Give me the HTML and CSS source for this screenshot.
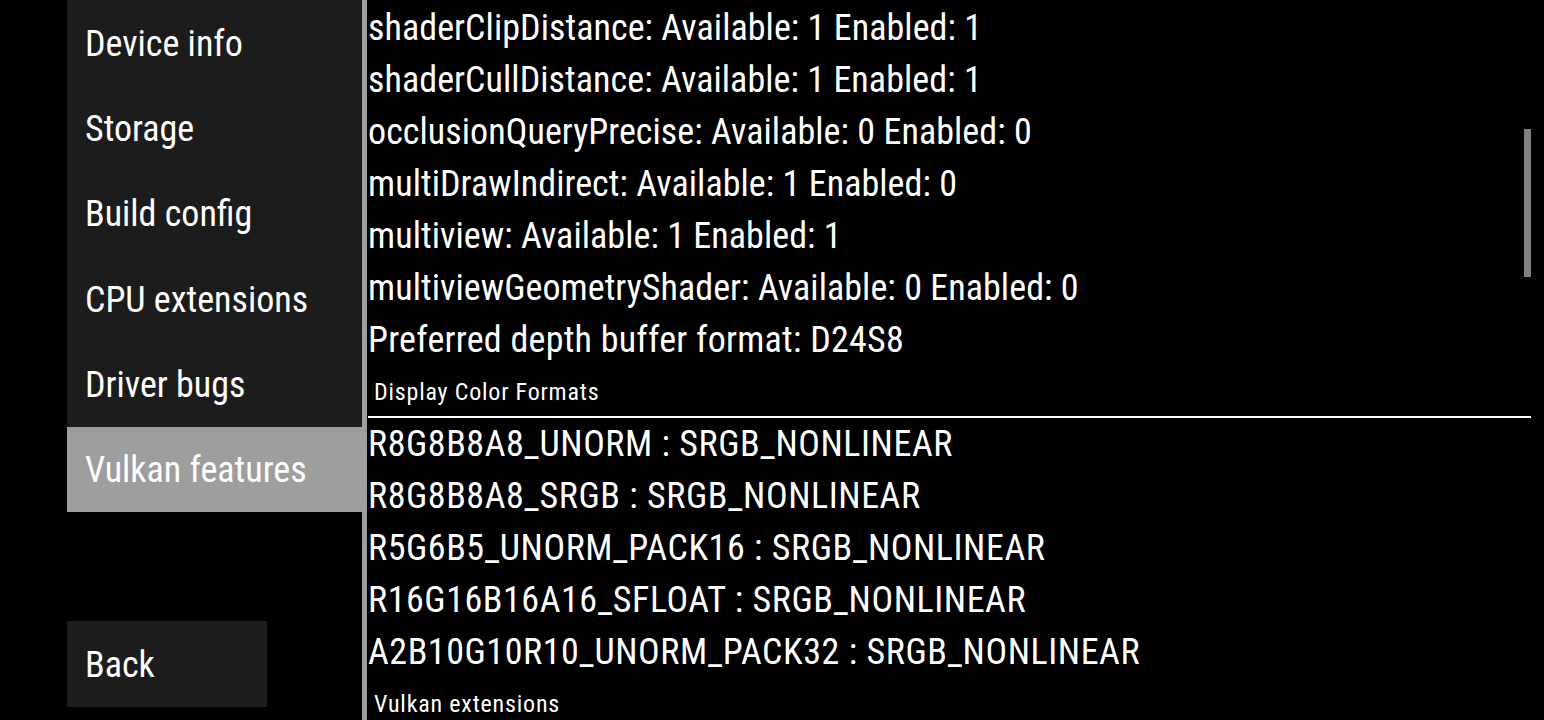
FILE: index.html
```html
<!DOCTYPE html>
<html>
<head>
<meta charset="utf-8">
<link rel="stylesheet" href="styles.css">
</head>
<body>
<div class="app">
  <aside class="sidebar">
    <nav class="nav">
      <div class="nav-item">Device info</div>
      <div class="nav-item">Storage</div>
      <div class="nav-item">Build config</div>
      <div class="nav-item">CPU extensions</div>
      <div class="nav-item">Driver bugs</div>
      <div class="nav-item selected">Vulkan features</div>
    </nav>
    <div class="back">Back</div>
  </aside>
  <div class="divider"></div>
  <main class="content">
    <div class="line">shaderClipDistance: Available: 1 Enabled: 1</div>
    <div class="line">shaderCullDistance: Available: 1 Enabled: 1</div>
    <div class="line">occlusionQueryPrecise: Available: 0 Enabled: 0</div>
    <div class="line">multiDrawIndirect: Available: 1 Enabled: 0</div>
    <div class="line">multiview: Available: 1 Enabled: 1</div>
    <div class="line">multiviewGeometryShader: Available: 0 Enabled: 0</div>
    <div class="line mixed">Preferred depth buffer format: D24S8</div>
    <div class="header">Display Color Formats</div>
    <div class="line caps">R8G8B8A8_UNORM : SRGB_NONLINEAR</div>
    <div class="line caps">R8G8B8A8_SRGB : SRGB_NONLINEAR</div>
    <div class="line caps">R5G6B5_UNORM_PACK16 : SRGB_NONLINEAR</div>
    <div class="line caps">R16G16B16A16_SFLOAT : SRGB_NONLINEAR</div>
    <div class="line caps">A2B10G10R10_UNORM_PACK32 : SRGB_NONLINEAR</div>
    <div class="header plain">Vulkan extensions</div>
    <div class="scrollbar"></div>
  </main>
</div>
</body>
</html>
```
FILE: styles.css
```css
html, body {
  margin: 0;
  padding: 0;
  background: #000;
}
body {
  font-family: "Roboto Condensed", Roboto, "Liberation Sans", sans-serif;
  font-stretch: condensed;
  color: #fff;
  overflow: hidden;
}
.app {
  display: flex;
  width: 1544px;
  height: 720px;
  overflow: hidden;
}
.sidebar {
  width: 295px;
  margin-left: 67px;
  display: flex;
  flex-direction: column;
}
.nav {
  background: #1c1c1c;
  display: flex;
  flex-direction: column;
}
.nav-item {
  height: 85.33px;
  display: flex;
  align-items: center;
  padding-left: 18px;
  font-size: 36px;
  padding-top: 2px;
  box-sizing: border-box;
}
.nav-item.selected {
  background: #9e9e9e;
}
.back {
  margin-top: auto;
  margin-bottom: 13px;
  width: 200px;
  height: 86px;
  background: #1c1c1c;
  display: flex;
  align-items: center;
  padding-left: 18px;
  padding-top: 2px;
  box-sizing: border-box;
  font-size: 36px;
}
.divider {
  width: 5px;
  background: #9e9e9e;
}
.content {
  flex: 1;
  position: relative;
  padding: 2px 13px 0 1px;
}
.line {
  font-size: 36px;
  line-height: 52px;
  white-space: nowrap;
  letter-spacing: 0.06px;
}
.line.mixed {
  letter-spacing: 0.25px;
}
.line.caps {
  letter-spacing: 0.56px;
}
.header {
  font-size: 24px;
  letter-spacing: 0.8px;
  padding: 12px 0 10px 6px;
  border-bottom: 2px solid #fff;
}
.header.plain {
  border-bottom: none;
}
.scrollbar {
  position: absolute;
  right: 13px;
  top: 129px;
  width: 7px;
  height: 148px;
  background: #808080;
}
```
